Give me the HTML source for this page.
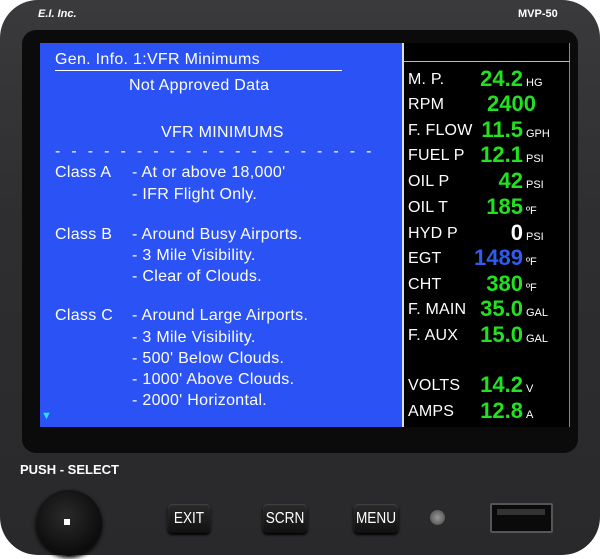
<!DOCTYPE html>
<html><head><style>
*{margin:0;padding:0;box-sizing:border-box}
body{width:600px;height:559px;background:#fff;position:relative;overflow:hidden;font-family:"Liberation Sans",sans-serif}
.bezel{position:absolute;left:0;top:0;width:600px;height:555px;border-radius:38px;background:linear-gradient(#3a3a3c,#2e2e30 40%,#29292b);}
.recess{position:absolute;left:22px;top:30px;width:556px;height:423px;border-radius:14px;background:#0b0b0c}
.blue{position:absolute;left:40px;top:43px;width:362px;height:384px;background:#2b52f5;color:#fff;font-size:16px;letter-spacing:0.3px}
.blue div{position:absolute;white-space:nowrap;line-height:18px}
.rp{position:absolute;left:402px;top:43px;width:168px;height:384px;background:#000;border-left:2px solid #ddd;border-right:1px solid #888}
.rp .hl{position:absolute;left:0;top:18px;width:166px;height:1px;background:#bbb}
.row{position:absolute;left:4px;width:160px;height:24px;color:#fff}
.lab{position:absolute;left:0;bottom:2px;font-size:16px;letter-spacing:0.2px}
.val{position:absolute;right:45px;bottom:-1px;font-size:22px;font-weight:bold;color:#22e21f}
.unit{position:absolute;left:118px;bottom:2px;font-size:11px}
.t{position:absolute;color:#fff;font-weight:bold;white-space:nowrap}
.btn{position:absolute;top:504px;height:29px;background:linear-gradient(#2a2a2a,#111);border-radius:5px;color:#fff;font-size:16px;text-align:center;line-height:29px;box-shadow:0 2px 3px #000,inset 0 1px 1px #444;transform:scaleX(0.85)}
</style></head><body>
<div class="bezel"></div>
<div class="t" style="left:38px;top:8px;font-size:11px;font-style:italic">E.I. Inc.</div>
<div class="t" style="left:518px;top:8px;font-size:11px">MVP-50</div>
<div class="recess"></div>
<div class="blue">
<div style="left:15px;top:8px">Gen. Info. 1:VFR Minimums</div>
<div style="left:15px;top:27px;width:287px;height:1px;background:#fff"></div>
<div style="left:89px;top:34px">Not Approved Data</div>
<div style="left:121px;top:81px">VFR MINIMUMS</div>
<div style="left:15px;top:100px;letter-spacing:3.3px">- - - - - - - - - - - - - - - - - - - -</div>
<div style="left:15px;top:121px">Class A</div><div style="left:92px;top:121px">- At or above 18,000'</div>
<div style="left:92px;top:143px">- IFR Flight Only.</div>
<div style="left:15px;top:183px">Class B</div><div style="left:92px;top:183px">- Around Busy Airports.</div>
<div style="left:92px;top:204px">- 3 Mile Visibility.</div>
<div style="left:92px;top:225px">- Clear of Clouds.</div>
<div style="left:15px;top:264px">Class C</div><div style="left:92px;top:264px">- Around Large Airports.</div>
<div style="left:92px;top:286px">- 3 Mile Visibility.</div>
<div style="left:92px;top:307px">- 500' Below Clouds.</div>
<div style="left:92px;top:328px">- 1000' Above Clouds.</div>
<div style="left:92px;top:349px">- 2000' Horizontal.</div>
<div style="left:1px;top:364px;color:#29e0ff;font-size:11px">▼</div>
</div>
<div class="rp"><div class="hl"></div>
<div class="row" style="top:24px"><span class="lab">M. P.</span><span class="val">24.2</span><span class="unit">HG</span></div>
<div class="row" style="top:49px"><span class="lab">RPM</span><span class="val" style="right:32px">2400</span></div>
<div class="row" style="top:75px"><span class="lab">F. FLOW</span><span class="val">11.5</span><span class="unit">GPH</span></div>
<div class="row" style="top:100px"><span class="lab">FUEL P</span><span class="val">12.1</span><span class="unit">PSI</span></div>
<div class="row" style="top:126px"><span class="lab">OIL P</span><span class="val">42</span><span class="unit">PSI</span></div>
<div class="row" style="top:152px"><span class="lab">OIL T</span><span class="val">185</span><span class="unit">ºF</span></div>
<div class="row" style="top:178px"><span class="lab">HYD P</span><span class="val" style="color:#fff">0</span><span class="unit">PSI</span></div>
<div class="row" style="top:203px"><span class="lab">EGT</span><span class="val" style="color:#2f5cf0">1489</span><span class="unit">ºF</span></div>
<div class="row" style="top:229px"><span class="lab">CHT</span><span class="val">380</span><span class="unit">ºF</span></div>
<div class="row" style="top:254px"><span class="lab">F. MAIN</span><span class="val">35.0</span><span class="unit">GAL</span></div>
<div class="row" style="top:280px"><span class="lab">F. AUX</span><span class="val">15.0</span><span class="unit">GAL</span></div>
<div class="row" style="top:330px"><span class="lab">VOLTS</span><span class="val">14.2</span><span class="unit">V</span></div>
<div class="row" style="top:356px"><span class="lab">AMPS</span><span class="val">12.8</span><span class="unit">A</span></div>
</div>
<div class="t" style="left:20px;top:462px;font-size:13px">PUSH - SELECT</div>
<div style="position:absolute;left:36px;top:490px;width:66px;height:66px;border-radius:50%;background:radial-gradient(circle at 45% 40%,#2a2a2a,#0c0c0c 70%);box-shadow:0 2px 4px #000"></div>
<div style="position:absolute;left:64px;top:519px;width:6px;height:6px;background:#fff"></div>
<div class="btn" style="left:164px;width:50px">EXIT</div>
<div class="btn" style="left:259px;width:52px">SCRN</div>
<div class="btn" style="left:350px;width:52px">MENU</div>
<div style="position:absolute;left:430px;top:510px;width:15px;height:15px;border-radius:50%;background:radial-gradient(#999,#444)"></div>
<div style="position:absolute;left:490px;top:503px;width:63px;height:30px;background:#0a0a0a;border:2px solid #555;border-radius:2px"><div style="position:absolute;left:5px;top:4px;width:48px;height:6px;background:#333"></div></div>
</body></html>
